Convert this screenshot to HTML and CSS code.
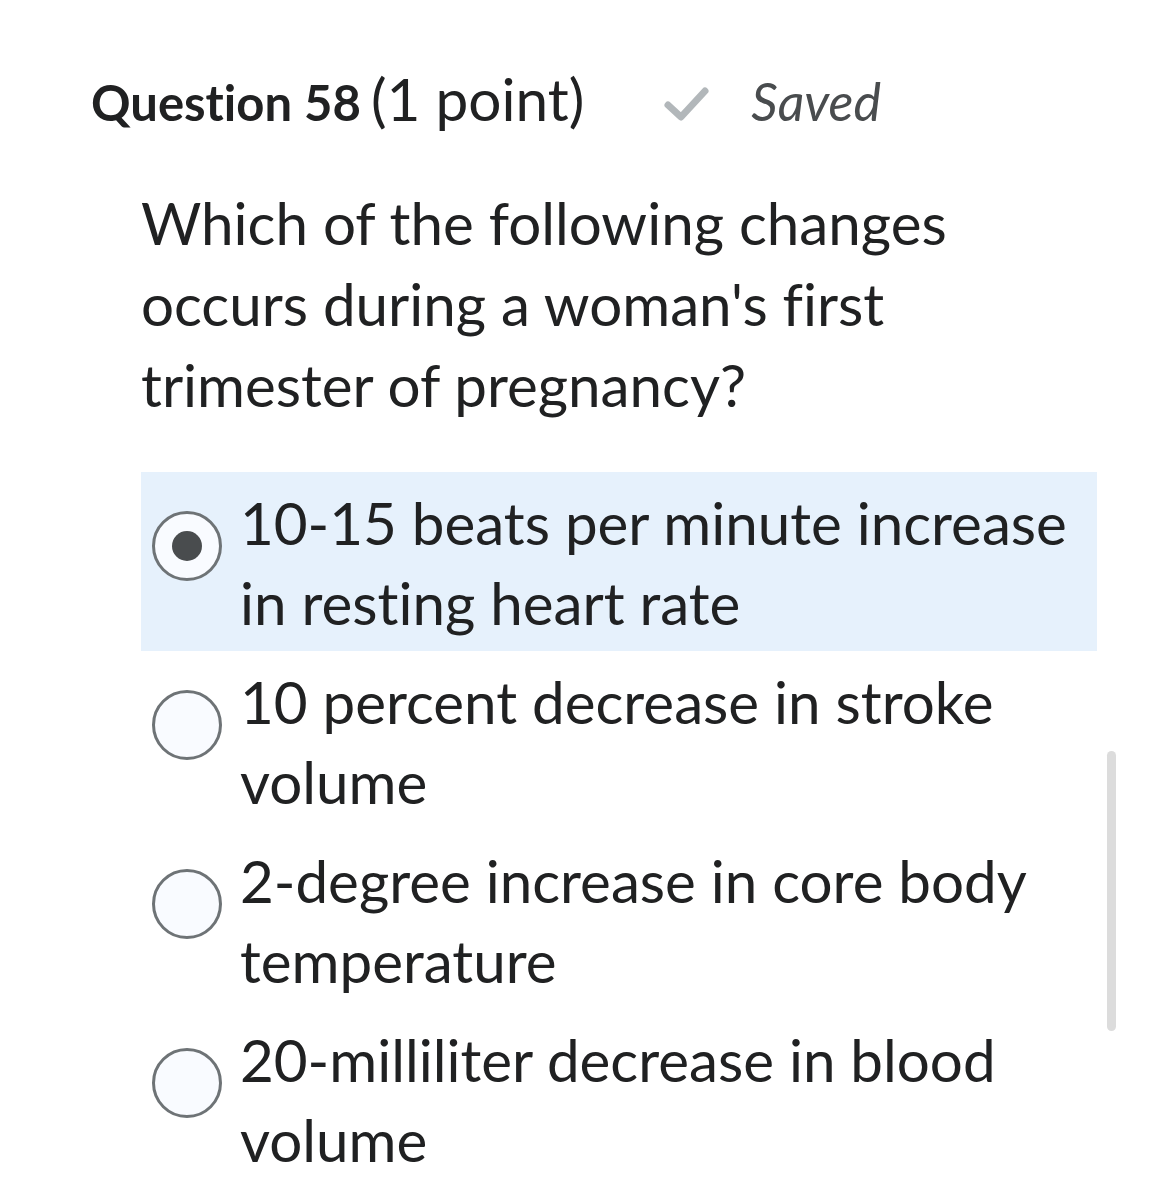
FILE: index.html
```html
<!DOCTYPE html>
<html>
<head>
<meta charset="utf-8">
<link rel="stylesheet" href="styles.css">
</head>
<body>
<div class="page">
  <div class="header">
    <h2 class="title"><span class="qnum">Question 58</span> <span class="points">(1 point)</span></h2>
    <div class="saved">
      <svg class="check" width="48" height="40" viewBox="0 0 48 40"><polyline points="5,19 18,31 42,5" fill="none" stroke="#b2b7ba" stroke-width="7" stroke-linecap="round" stroke-linejoin="round"/></svg>
      <span class="saved-text">Saved</span>
    </div>
  </div>
  <p class="question">Which of the following changes occurs during a woman's first trimester of pregnancy?</p>
  <div class="options">
    <label class="option selected">
      <span class="radio checked"><span class="dot"></span></span>
      <span class="opt-text">10-15 beats per minute increase in resting heart rate</span>
    </label>
    <label class="option">
      <span class="radio"></span>
      <span class="opt-text">10 percent decrease in stroke volume</span>
    </label>
    <label class="option">
      <span class="radio"></span>
      <span class="opt-text">2-degree increase in core body temperature</span>
    </label>
    <label class="option">
      <span class="radio"></span>
      <span class="opt-text">20-milliliter decrease in blood volume</span>
    </label>
  </div>
  <div class="scrollbar"></div>
</div>
</body>
</html>
```
FILE: styles.css
```css
html, body {
  margin: 0;
  padding: 0;
  background: #ffffff;
}
body {
  font-family: Lato, "Open Sans", sans-serif;
  color: #202122;
  font-variant-ligatures: none;
}
.page {
  position: relative;
  width: 1170px;
  height: 1196px;
  overflow: hidden;
}
.header {
  display: flex;
  align-items: baseline;
  padding: 62px 0 0 91px;
  height: 72px;
}
.title {
  margin: 0;
  font-weight: 400;
  line-height: 72px;
  white-space: nowrap;
}
.qnum {
  font-weight: 700;
  font-size: 49px;
}
.points {
  font-size: 58.5px;
  font-weight: 400;
  margin-left: 4px;
}
.saved {
  display: flex;
  align-items: baseline;
  margin-left: 79px;
}
.check {
  align-self: center;
  position: relative;
  top: 5px;
}
.saved-text {
  margin-left: 40px;
  font-style: italic;
  font-size: 52px;
  color: #494c4e;
}
.question {
  margin: 0;
  padding: 48px 0 0 141px;
  width: 850px;
  font-size: 58.3px;
  line-height: 81px;
}
.options {
  margin: 47px 0 0 141px;
  width: 956px;
  display: flex;
  flex-direction: column;
}
.option {
  display: flex;
  align-items: center;
  height: 179px;
  box-sizing: border-box;
  padding: 0 0 0 11px;
}
.option.selected {
  background: #e6f1fc;
}
.radio {
  flex: none;
  width: 64px;
  height: 64px;
  border: 3px solid #6e7376;
  border-radius: 50%;
  background: #f9fbff;
  display: flex;
  align-items: center;
  justify-content: center;
  align-self: flex-start;
  margin-top: 39px;
}
.dot {
  width: 30px;
  height: 30px;
  border-radius: 50%;
  background: #494c4e;
}
.opt-text {
  margin-left: 18px;
  font-size: 58.3px;
  line-height: 80px;
  width: 840px;
}
.scrollbar {
  position: absolute;
  left: 1107px;
  top: 751px;
  width: 9px;
  height: 280px;
  border-radius: 5px;
  background: #dcdcdc;
}
```
